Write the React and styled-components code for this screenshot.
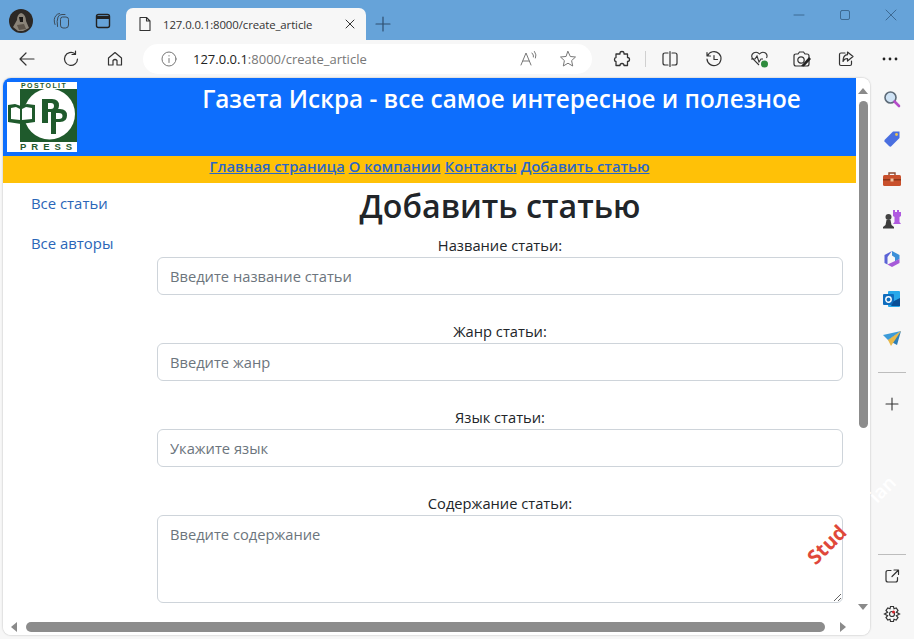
import React from "react";
import styled, { createGlobalStyle } from "styled-components";

const Global = createGlobalStyle`
  html, body { margin: 0; padding: 0; width: 914px; height: 639px; overflow: hidden; background: #f7f7f7; }
  * { box-sizing: border-box; }
  #root { width: 914px; height: 639px; }
`;
const Win = styled.div`
  width: 914px; height: 639px; display: flex; flex-direction: column;
  font-family: "Open Sans", "Noto Sans", sans-serif; background: #f7f7f7; position: relative; overflow: hidden;
`;
const TabStrip = styled.div`
  height: 40px; background: #66a3d9; display: flex; align-items: flex-end; flex: none;
`;
const StripIcons = styled.div`
  width: 126px; height: 40px; display: flex; align-items: center; padding: 2px 0 0 9px; flex: none;
`;
const StripSlot = styled.div`
  width: ${p => p.$w}px; display: flex; align-items: center; justify-content: center; flex: none;
`;
const Tab = styled.div`
  width: 240px; height: 32px; background: #f7f7f7; border-radius: 7px 7px 0 0; display: flex; align-items: center;
  padding: 0 10px 0 11px; flex: none;
`;
const TabTitle = styled.span`
  font-size: 11.4px; color: #333; margin-left: 10px; flex: 1; white-space: nowrap; letter-spacing: -0.1px;
`;
const NewTab = styled.div`
  width: 34px; height: 40px; display: flex; align-items: center; justify-content: center; padding-top: 8px; flex: none;
`;
const WinCtl = styled.div`
  margin-left: auto; display: flex; height: 40px; align-self: flex-start; flex: none;
`;
const CtlBtn = styled.div`
  width: 46px; height: 30px; display: flex; align-items: center; justify-content: center;
`;
const Toolbar = styled.div`
  height: 38px; display: flex; align-items: center; padding: 0 0 0 9px; flex: none; background: #f7f7f7;
`;
const NavBtn = styled.div`
  width: ${p => p.$w || 44}px; margin-left: ${p => p.$ml || 0}px; display: flex; align-items: center; justify-content: center; flex: none;
`;
const Address = styled.div`
  width: 449px; height: 30px; margin-left: 10px; background: #fff; border-radius: 15px; display: flex; align-items: center; padding: 0 3px 0 18px; flex: none;
`;
const Url = styled.span`
  font-size: 13px; margin-left: 16px; color: #777; flex: 1; white-space: nowrap;
`;
const UrlHost = styled.span` color: #222; `;
const ReadAloud = styled.div` width: 20px; height: 18px; margin-right: 8px; flex: none; `;
const Divider = styled.div`
  width: 1px; height: 16px; background: #d0d0d0; flex: none;
`;
const Body = styled.div`
  flex: 1; display: flex; min-height: 0;
`;
const Card = styled.div`
  width: 867px; margin: 0 0 4px 3px; background: #fff; border-radius: 8px; overflow: hidden; display: flex; flex-direction: column;
  box-shadow: 0 0 2px rgba(0,0,0,.3); position: relative; flex: none;
`;
const CardMain = styled.div` flex: 1; display: flex; min-height: 0; `;
const Page = styled.div` width: 853px; flex: none; overflow: hidden; `;
const Header = styled.header`
  height: 78px; background: #0d6efd; display: flex; padding: 4px 0 0 4px;
`;
const Logo = styled.div` width: 70px; height: 70px; flex: none; background: #fff; `;
const SiteTitle = styled.h2`
  margin: 0; flex: 1; text-align: center; color: #fff; font-size: 24.3px; font-weight: 600; line-height: 32px; padding: 1px 0 0 70px; white-space: nowrap;
`;
const MenuBar = styled.nav`
  height: 27px; background: #ffc107; display: flex; justify-content: center; gap: 4px; align-items: center; padding-bottom: 7px;
`;
const MenuLink = styled.a`
  color: #2a66c9; text-decoration: underline; font-size: 14.75px; font-weight: 600; white-space: nowrap;
`;
const Columns = styled.div` display: flex; `;
const Side = styled.aside`
  width: 154px; flex: none; display: flex; flex-direction: column; padding: 8px 0 0 28px; gap: 16px;
`;
const SideLink = styled.a`
  color: #2a66b8; font-size: 14.9px; line-height: 24px; white-space: nowrap;
`;
const Main = styled.main`
  width: 686px; flex: none; text-align: center;
`;
const Title = styled.h1`
  margin: 0; font-size: 32.2px; font-weight: 600; color: #212529; line-height: 46px; height: 52px; white-space: nowrap;
`;
const Field = styled.div` height: 86px; display: flex; flex-direction: column; `;
const Label = styled.label`
  font-size: 14.7px; line-height: 20px; margin-bottom: 2px; color: #212529; white-space: nowrap; flex: none;
`;
const Input = styled.input`
  width: 686px; height: 38px; border: 1px solid #ced4da; border-radius: 6px; padding: 0 12px; font: inherit; font-size: 14.7px; color: #212529; background: #fff; flex: none;
  &::placeholder { color: #6c757d; opacity: 1; }
`;
const Area = styled.textarea`
  width: 686px; height: 88px; border: 1px solid #ced4da; border-radius: 6px; padding: 7px 12px; font: inherit; font-size: 14.7px; line-height: 22px; color: #212529; background: #fff; display: block; resize: vertical; flex: none;
  &::placeholder { color: #6c757d; opacity: 1; }
`;
const VBar = styled.div`
  width: 14px; flex: none; display: flex; flex-direction: column; align-items: center; padding-top: 10px; background: #fff;
`;
const ArrowUp = styled.div`
  width: 0; height: 0; border-left: 5px solid transparent; border-right: 5px solid transparent; border-bottom: 6px solid #8a8a8a; flex: none;
`;
const ArrowDown = styled.div`
  width: 0; height: 0; border-left: 5px solid transparent; border-right: 5px solid transparent; border-top: 6px solid #8a8a8a; flex: none; margin-top: auto; margin-bottom: 8px;
`;
const VThumb = styled.div`
  width: 9px; height: 327px; background: #8c8c8c; border-radius: 5px; margin-top: 7px; flex: none;
`;
const HBar = styled.div`
  height: 17px; flex: none; display: flex; align-items: center; padding: 1px 0 0 8px; background: #fff;
`;
const ArrowLeft = styled.div`
  width: 0; height: 0; border-top: 5px solid transparent; border-bottom: 5px solid transparent; border-right: 6px solid #8a8a8a; flex: none;
`;
const ArrowRight = styled.div`
  width: 0; height: 0; border-top: 5px solid transparent; border-bottom: 5px solid transparent; border-left: 6px solid #8a8a8a; flex: none; margin-left: 15px;
`;
const HThumb = styled.div`
  width: 799px; height: 10px; background: #8c8c8c; border-radius: 5px; margin-left: 9px; flex: none;
`;
const Rail = styled.div`
  width: 44px; flex: none; display: flex; flex-direction: column; align-items: center; padding: 1px 0 0 0;
`;
const RailBtn = styled.div`
  height: ${p => p.$h || 40}px; width: 44px; display: flex; align-items: center; justify-content: center; flex: none;
`;
const RailRule = styled.div`
  width: 28px; height: 1px; background: #bdbdbd; flex: none; margin: ${p => p.$m};
`;
const Watermark = styled.div`
  position: absolute; left: 820px; top: 523px; color: #e0483a; font: 700 20px "Open Sans", sans-serif; transform: rotate(-45deg); transform-origin: left bottom; white-space: nowrap; margin-top: 20px;
`;
const WatermarkFaint = styled.div`
  position: absolute; left: 868px; top: 476px; color: #fff; font: 600 19px "Open Sans", sans-serif; transform: rotate(-45deg); white-space: nowrap;
`;

const Ic = ({ w = 18, h = 18, vb = "0 0 18 18", c = "#333", sw = 1.2, children }) => (
  <svg width={w} height={h} viewBox={vb} fill="none" stroke={c} strokeWidth={sw} strokeLinecap="round" strokeLinejoin="round">{children}</svg>
);

const LogoArt = () => (
  <svg width="70" height="70" viewBox="0 0 70 70">
    <rect width="70" height="70" fill="#fff" />
    <rect x="13" y="7" width="57" height="53" fill="#1f5a2c" />
    <circle cx="42.5" cy="32" r="25.5" fill="#fff" />
    <text x="14" y="6" fontFamily="Liberation Sans" fontWeight="700" fontSize="7" letterSpacing="1.4" fill="#1f5a2c">POSTOLIT</text>
    <text x="13" y="68" fontFamily="Liberation Sans" fontWeight="700" fontSize="9.5" letterSpacing="5" fill="#1f5a2c">PRESS</text>
    <path d="M1 23 L8 22 L14 24 L20 22 L28 23 V40 L14 42 L1 40 Z" fill="#1f5a2c" />
    <path d="M4 26 L9 25 L13 27 V38 L4 37 Z M15 27 L19 25 L25 26 V37 L15 38 Z" fill="#fff" />
    <path d="M35 17 H45 Q52 17 52 23.5 Q52 30 45 30 H41 V41 H35 Z M41 21 V27 H44 Q47 27 47 24 Q47 21 44 21 Z" fill="#1f5a2c" />
    <path d="M44 27 H53 Q60 27 60 33.5 Q60 40 53 40 H49 V52 H44 Z M49 31 V37 H52 Q55.5 37 55.5 34 Q55.5 31 52 31 Z" fill="#1f5a2c" />
  </svg>
);

export default function App() {
  return (
    <Win>
      <Global />
      <TabStrip>
        <StripIcons>
          <StripSlot $w={24}>
            <svg width="24" height="24" viewBox="0 0 24 24">
              <circle cx="12" cy="12" r="12" fill="#2c2825" />
              <path d="M12 4 C16 5 17 9 17 12 L20 19 L14 22 H9 L4 18 L8 11 C8 8 9 5 12 4 Z" fill="#8a8378" />
              <path d="M10 8 H14 L14 13 L11 13 Z" fill="#1a1715" />
              <path d="M8 16 L15 15 L17 20 L10 21 Z" fill="#5c544b" />
            </svg>
          </StripSlot>
          <StripSlot $w={56}>
            <Ic c="#3b4a58" sw={1}>
              <path d="M8.5 7 Q8.5 5 10.5 5 H14 Q16.5 5 16.5 7.5 V13 Q16.5 16 13.5 16 H11 Q8.5 16 8.5 13.5 Z" />
              <path d="M5.5 14.5 Q4.5 9 6 5 Q7 2.5 10 2.5 H13" />
              <path d="M3 12.5 Q1 7 4 3.5 Q5 2 7.5 1.5" />
            </Ic>
          </StripSlot>
          <StripSlot $w={28}>
            <Ic c="#222">
              <rect x="2.5" y="2.5" width="13" height="13" rx="2" strokeWidth="1.4" />
              <path d="M3 5.5 H15" strokeWidth="3" strokeLinecap="butt" />
            </Ic>
          </StripSlot>
        </StripIcons>
        <Tab>
          <Ic w={16} h={16} vb="0 0 16 16" sw={1.1}>
            <path d="M3 1.5 H9.5 L13 5 V14.5 H3 Z M9.5 1.5 V5 H13" />
          </Ic>
          <TabTitle>127.0.0.1:8000/create_article</TabTitle>
          <Ic w={12} h={12} vb="0 0 12 12" sw={1}><path d="M2 2 L10 10 M10 2 L2 10" /></Ic>
        </Tab>
        <NewTab>
          <Ic w={16} h={16} vb="0 0 16 16" c="#2f4f6f"><path d="M8 1 V15 M1 8 H15" /></Ic>
        </NewTab>
        <WinCtl>
          <CtlBtn><Ic w={12} h={12} vb="0 0 12 12" c="#3d6a93" sw={1}><path d="M1 6 H11" /></Ic></CtlBtn>
          <CtlBtn><Ic w={12} h={12} vb="0 0 12 12" c="#3d6a93" sw={1}><rect x="1.5" y="1.5" width="9" height="9" rx="1.5" /></Ic></CtlBtn>
          <CtlBtn><Ic w={12} h={12} vb="0 0 12 12" c="#3d6a93" sw={1}><path d="M1 1 L11 11 M11 1 L1 11" /></Ic></CtlBtn>
        </WinCtl>
      </TabStrip>
      <Toolbar>
        <NavBtn $w={36}><Ic><path d="M16 9 H2 M8 3 L2 9 L8 15" /></Ic></NavBtn>
        <NavBtn $w={52}><Ic><path d="M15.5 9 A6.5 6.5 0 1 1 13 3.8 M13.5 1 V4.5 H10" /></Ic></NavBtn>
        <NavBtn $w={36}><Ic><path d="M2.5 8 L9 2.5 L15.5 8 V15 H11 V10.5 Q9 8.5 7 10.5 V15 H2.5 Z" /></Ic></NavBtn>
        <Address>
          <Ic w={16} h={16} vb="0 0 16 16" c="#777" sw={1}>
            <circle cx="8" cy="8" r="7" /><path d="M8 7.5 V11.5 M8 4.6 V5" />
          </Ic>
          <Url><UrlHost>127.0.0.1</UrlHost>:8000/create_article</Url>
          <ReadAloud>
            <Ic w={20} h={18} vb="0 0 20 18" c="#777" sw={1}>
              <path d="M2 15 L7 3 L12 15 M4 11 H10 M13 3 Q15 5 14.5 7 M15.5 1.5 Q18 5 16.5 8" />
            </Ic>
          </ReadAloud>
          <NavBtn $w={42}>
            <Ic c="#777" sw={1}><path d="M9 1.5 L11.3 6.5 L16.5 7 L12.6 10.6 L13.7 16 L9 13.2 L4.3 16 L5.4 10.6 L1.5 7 L6.7 6.5 Z" /></Ic>
          </NavBtn>
        </Address>
        <NavBtn $w={46} $ml={7}>
          <Ic><path d="M7 3 Q7 1.5 9 1.5 Q11 1.5 11 3 L11 4 H14.5 V7.5 Q16.5 7.5 16.5 9.5 Q16.5 11.5 14.5 11.5 V15.5 H11 Q11 13.5 9 13.5 Q7 13.5 7 15.5 H3 V11.5 Q1.5 11.5 1.5 9.5 Q1.5 7.5 3 7.5 V4 H7 Z" strokeWidth="1.3" /></Ic>
        </NavBtn>
        <Divider />
        <NavBtn $w={48}><Ic><path d="M7 3 H4 Q2 3 2 5 V13 Q2 15 4 15 H7 M11 3 H14 Q16 3 16 5 V13 Q16 15 14 15 H11 M9 1.5 V16.5" /></Ic></NavBtn>
        <NavBtn $w={40}><Ic><path d="M2.5 6 A7 7 0 1 1 2 9 M2 2.5 V6 H5.5 M9 5.5 V9.5 H12.5" /></Ic></NavBtn>
        <NavBtn $w={52}>
          <svg width="20" height="18" viewBox="0 0 20 18" fill="none" stroke="#333" strokeWidth="1.1">
            <path d="M9 15 L2.5 8.5 Q0.5 5 3.5 3 Q7 1 9.5 4 Q12 1 15.5 3 Q18 5 16.5 8" />
            <path d="M1 9 H5 L7 6 L9 12 L11 9 H13" />
            <circle cx="14.5" cy="14" r="3.5" fill="#2e8b3d" stroke="none" />
          </svg>
        </NavBtn>
        <NavBtn $w={32}>
          <svg width="20" height="18" viewBox="0 0 20 18" fill="none" stroke="#333" strokeWidth="1.2">
            <path d="M2 6 Q2 4 4 4 H6 L7.5 2 H11.5 L13 4 H15 Q17 4 17 6 V14 Q17 16 15 16 H4 Q2 16 2 14 Z" />
            <circle cx="9" cy="10" r="3.2" />
            <path d="M9 16 L17 7 L19 9 L12 16.5 Z" fill="#222" stroke="none" />
          </svg>
        </NavBtn>
        <NavBtn $w={56}>
          <Ic><path d="M8 3 H4 Q2.5 3 2.5 4.5 V14 Q2.5 15.5 4 15.5 H13 Q14.5 15.5 14.5 14 V11 M10.5 2 L16 6.5 L10.5 11 V8.5 Q7 8.5 6 11.5 Q6 5 10.5 4.7 Z" /></Ic>
        </NavBtn>
        <NavBtn $w={32}>
          <svg width="16" height="4" viewBox="0 0 16 4" fill="#222"><circle cx="2" cy="2" r="1.4" /><circle cx="8" cy="2" r="1.4" /><circle cx="14" cy="2" r="1.4" /></svg>
        </NavBtn>
      </Toolbar>
      <Body>
        <Card>
          <CardMain>
            <Page>
              <Header>
                <Logo><LogoArt /></Logo>
                <SiteTitle>Газета Искра - все самое интересное и полезное</SiteTitle>
              </Header>
              <MenuBar>
                <MenuLink>Главная страница</MenuLink>
                <MenuLink>О компании</MenuLink>
                <MenuLink>Контакты</MenuLink>
                <MenuLink>Добавить статью</MenuLink>
              </MenuBar>
              <Columns>
                <Side>
                  <SideLink>Все статьи</SideLink>
                  <SideLink>Все авторы</SideLink>
                </Side>
                <Main>
                  <Title>Добавить статью</Title>
                  <Field><Label>Название статьи:</Label><Input placeholder="Введите название статьи" /></Field>
                  <Field><Label>Жанр статьи:</Label><Input placeholder="Введите жанр" /></Field>
                  <Field><Label>Язык статьи:</Label><Input placeholder="Укажите язык" /></Field>
                  <Field><Label>Содержание статьи:</Label><Area placeholder="Введите содержание" /></Field>
                </Main>
              </Columns>
            </Page>
            <VBar>
              <ArrowUp />
              <VThumb />
              <ArrowDown />
            </VBar>
          </CardMain>
          <HBar>
            <ArrowLeft />
            <HThumb />
            <ArrowRight />
          </HBar>
        </Card>
        <Rail>
          <RailBtn>
            <svg width="18" height="18" viewBox="0 0 18 18"><circle cx="7.5" cy="7.5" r="5.5" fill="#cfe3f5" stroke="#5d6b78" strokeWidth="1.6" /><path d="M11.5 11.5 L16 16" stroke="#b44cc9" strokeWidth="2.6" strokeLinecap="round" /></svg>
          </RailBtn>
          <RailBtn>
            <svg width="18" height="18" viewBox="0 0 18 18"><path d="M10 1.5 H16.5 V8 L8 16.5 Q7 17 6 16 L1.5 11.5 Q1 10.5 2 9.5 Z" fill="#4a6fe0" /><circle cx="13.5" cy="4.5" r="1.4" fill="#f0c24a" /></svg>
          </RailBtn>
          <RailBtn>
            <svg width="18" height="16" viewBox="0 0 18 16"><path d="M6 4 V2 H12 V4" fill="none" stroke="#8a4a32" strokeWidth="1.4" /><rect x="0" y="4" width="18" height="11" rx="1.5" fill="#c9502c" /><rect x="0" y="8" width="18" height="1.5" fill="#8e3618" /><rect x="7.5" y="7.5" width="3" height="3" fill="#f1c2a0" /></svg>
          </RailBtn>
          <RailBtn>
            <svg width="18" height="20" viewBox="0 0 18 20"><path d="M10 1 H12 V3 H14 V1 H16 V3 H18 V1 V7 L16.5 8 V13 L18 15 H10 L11.5 13 V8 L10 7 Z" fill="#b05ae0" /><circle cx="5.5" cy="8" r="3" fill="#444" /><path d="M3.5 11 H7.5 L8.5 16 L11 18 V19.5 H0 V18 L2.5 16 Z" fill="#3c3c3c" /></svg>
          </RailBtn>
          <RailBtn>
            <svg width="18" height="18" viewBox="0 0 18 18"><path d="M9 1 L16.5 5 V9 L12 11.5 V7.5 L9 5.5 Z" fill="#3d8fd8" /><path d="M16.5 9 V13 L9 17 L4.5 14.5 L12 11 Z" fill="#a65ad8" /><path d="M9 1 L1.5 5 V13 L4.5 14.5 V7 Z" fill="#5a63d6" /></svg>
          </RailBtn>
          <RailBtn>
            <svg width="18" height="18" viewBox="0 0 18 18"><rect x="5" y="1" width="12" height="16" rx="1" fill="#28a8ea" /><rect x="0" y="4" width="11" height="11" rx="1" fill="#0f6cbd" /><circle cx="5.5" cy="9.5" r="2.7" fill="none" stroke="#fff" strokeWidth="1.4" /><path d="M11 11 L17 8 V16 H8 Z" fill="#0a4f96" /></svg>
          </RailBtn>
          <RailBtn>
            <svg width="18" height="16" viewBox="0 0 18 16"><path d="M0 4 L18 0 L5 9 Z" fill="#3d9bd8" /><path d="M5 9 L18 0 L14 14 Z" fill="#2e7fb8" /><path d="M5 9 L18 0 L8 15 Z" fill="#e9b949" /></svg>
          </RailBtn>
          <RailRule $m="13px 0 11px" />
          <RailBtn>
            <Ic w={14} h={14} vb="0 0 14 14" sw={1.1}><path d="M7 1 V13 M1 7 H13" /></Ic>
          </RailBtn>
          <RailRule $m="130px 0 1px" />
          <RailBtn>
            <Ic w={16} h={16} vb="0 0 16 16"><path d="M7 2.5 H4 Q2 2.5 2 4.5 V12 Q2 14 4 14 H11.5 Q13.5 14 13.5 12 V9.5 M8 8.5 L14 2.5 M10 2 H14.5 V6.5" /></Ic>
          </RailBtn>
          <RailBtn $h={36}>
            <svg width="18" height="18" viewBox="0 0 18 18" fill="none" stroke="#333" strokeWidth="1.2"><path d="M7.5 1.5 H10.5 L11 3.8 L13.2 3 L15 5.5 L13.4 7.3 L16.5 9 L13.4 10.7 L15 12.5 L13.2 15 L11 14.2 L10.5 16.5 H7.5 L7 14.2 L4.8 15 L3 12.5 L4.6 10.7 L1.5 9 L4.6 7.3 L3 5.5 L4.8 3 L7 3.8 Z" /><circle cx="9" cy="9" r="2.5" /><circle cx="10.5" cy="7" r="1.5" fill="#d8232a" stroke="none" /></svg>
          </RailBtn>
        </Rail>
      </Body>
      <WatermarkFaint>ian</WatermarkFaint>
      <Watermark>Stud</Watermark>
    </Win>
  );
}
